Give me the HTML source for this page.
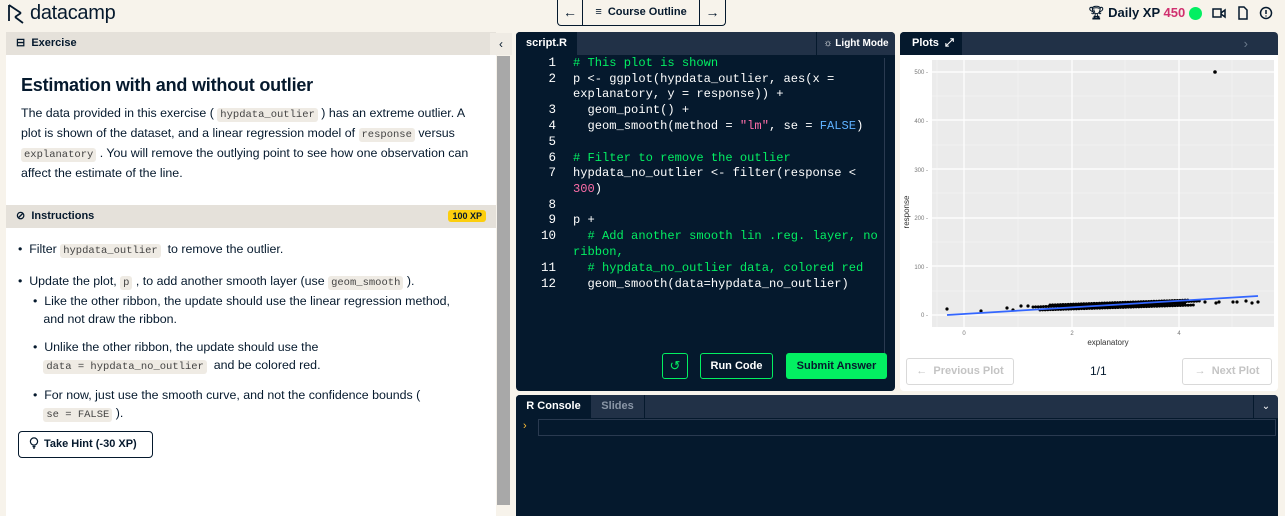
<!DOCTYPE html>
<html><head><meta charset="utf-8"><style>
*{box-sizing:border-box;margin:0;padding:0}
body{width:1285px;height:516px;overflow:hidden;background:#f7f3eb;font-family:"Liberation Sans",sans-serif;color:#05192d;position:relative}
.abs{position:absolute}
code{font-family:"Liberation Mono",monospace;font-size:10.5px;background:#efebe4;padding:1px 3px;border-radius:3px;color:#444}
.lp p{font-size:12.4px;line-height:18px}
.mono{font-family:"Liberation Mono",monospace}
.code div{position:absolute;left:0;font-size:12.1px;white-space:pre;color:#fff}
.code div.c{color:#03ef62}
.ln{position:absolute;width:40px;text-align:right;font-family:"Liberation Mono",monospace;font-size:12.5px;color:#fff}
ul{list-style:none}
</style></head><body>
<!-- top bar -->
<div class="abs" style="left:6px;top:2px;font-size:20px;color:#05192d;display:flex;align-items:center">
<svg width="22" height="22" viewBox="0 0 22 22"><path d="M3 2v16M3 2l12 8M15 10l-6 4M9 14l8 6" stroke="#05192d" stroke-width="1.8" fill="none"/></svg><span style="margin-left:2px;letter-spacing:-0.3px">datacamp</span></div>
<div class="abs" style="left:557px;top:0;width:169px;height:26px;border:1px solid #05192d;border-top:none;border-radius:0 0 4px 4px;display:flex;font-size:11px;font-weight:bold">
<div style="width:25px;border-right:1px solid #05192d;text-align:center;line-height:24px;font-size:14px">←</div>
<div style="flex:1;text-align:center;line-height:24px;border-right:1px solid #05192d">≡&nbsp; Course Outline</div>
<div style="width:25px;text-align:center;line-height:24px;font-size:14px">→</div></div>
<div class="abs" style="left:1088px;top:5px;font-size:13px;font-weight:bold">🏆︎ Daily XP <span style="color:#d0306f">450</span></div>
<div class="abs" style="left:1189px;top:7px;width:13px;height:13px;border-radius:50%;background:#03ef62"></div>
<svg class="abs" style="left:1212px;top:7px" width="14" height="12"><rect x="1" y="2" width="8" height="8" fill="none" stroke="#05192d" stroke-width="1.5"/><path d="M9 6l4-3v7l-4-3" fill="none" stroke="#05192d" stroke-width="1.5"/></svg>
<svg class="abs" style="left:1237px;top:6px" width="12" height="14"><path d="M2 1h5l3 3v9H2z" fill="none" stroke="#05192d" stroke-width="1.5"/></svg>
<svg class="abs" style="left:1259px;top:6px" width="14" height="14"><circle cx="7" cy="7" r="5.5" fill="none" stroke="#05192d" stroke-width="1.5"/><path d="M7 4v4M7 9.5v1" stroke="#05192d" stroke-width="1.5"/></svg>

<!-- left panel -->
<div class="abs lp" style="left:6px;top:32px;width:490px;height:484px;background:#fff">
<div style="height:23px;background:#e5e1da;font-size:11px;font-weight:bold;line-height:22px;padding-left:10px">⊟&nbsp; Exercise</div>
<div style="padding:0 15px">
<div style="font-size:18px;font-weight:bold;margin-top:20px;letter-spacing:-0.2px">Estimation with and without outlier</div>
<p style="margin-top:8px">The data provided in this exercise ( <code>hypdata_outlier</code> ) has an extreme outlier. A plot is shown of the dataset, and a linear regression model of <code>response</code> versus <code>explanatory</code> . You will remove the outlying point to see how one observation can affect the estimate of the line.</p></div>
<div class="abs" style="top:173px;left:0;width:490px;height:23px;background:#e5e1da;font-size:11px;font-weight:bold;line-height:22px;padding-left:10px">⊘&nbsp; Instructions<span style="position:absolute;right:10px;top:5px;background:#fcce0d;font-size:9px;line-height:12px;padding:0 4px;border-radius:3px">100 XP</span></div>
<div class="abs" style="top:208px;left:12px;width:470px">
<p>•&nbsp; Filter <code>hypdata_outlier</code> &nbsp;to remove the outlier.</p>
<p style="margin-top:12px">•&nbsp; Update the plot, <code>p</code> , to add another smooth layer (use <code>geom_smooth</code> ).</p>
<p style="padding-left:15px">•&nbsp; Like the other ribbon, the update should use the linear regression method,<br>&nbsp;&nbsp;&nbsp;and not draw the ribbon.</p>
<p style="padding-left:15px;margin-top:10px">•&nbsp; Unlike the other ribbon, the update should use the<br>&nbsp;&nbsp;&nbsp;<code>data = hypdata_no_outlier</code> &nbsp;and be colored red.</p>
<p style="padding-left:15px;margin-top:10px">•&nbsp; For now, just use the smooth curve, and not the confidence bounds (<br>&nbsp;&nbsp;&nbsp;<code>se = FALSE</code> ).</p>
</div>
<div class="abs" style="left:12px;top:399px;width:135px;height:27px;border:1px solid #05192d;border-radius:4px;font-size:11px;font-weight:bold;line-height:25px;padding-left:10px"><svg width="10" height="12" style="vertical-align:-2px;margin-right:5px"><circle cx="5" cy="4.5" r="3.6" fill="none" stroke="#05192d" stroke-width="1.2"/><path d="M3.5 9.5h3M4 11h2" stroke="#05192d" stroke-width="1.2"/></svg>Take Hint (-30 XP)</div>
</div>
<div class="abs" style="left:490px;top:33px;width:22px;height:22px;background:#efebe4;text-align:center;font-size:12px;line-height:22px">‹</div>
<div class="abs" style="left:497px;top:56px;width:13px;height:449px;background:#a8a8a8"></div>

<!-- editor -->
<div class="abs" style="left:516px;top:32px;width:379px;height:359px;background:#05192d;border-radius:4px;overflow:hidden">
<div style="height:23px;background:#213147;position:relative">
<div style="position:absolute;left:0;width:61px;height:23px;background:#05192d;color:#fff;font-size:11px;font-weight:bold;line-height:23px;text-align:center">script.R</div>
<div style="position:absolute;right:0;width:79px;height:23px;border-left:1px solid #05192d;color:#fff;font-size:10px;font-weight:bold;line-height:23px;text-align:center">☼ Light Mode</div></div>
<div style="position:absolute;left:368px;top:26px;width:1px;height:300px;background:#2a3a50"></div>
<div class="abs" style="left:0;top:0">
<div class="ln" style="top:24px">1</div><div class="ln" style="top:40px">2</div><div class="ln" style="top:71px">3</div><div class="ln" style="top:87px">4</div><div class="ln" style="top:103px">5</div><div class="ln" style="top:119px">6</div><div class="ln" style="top:134px">7</div><div class="ln" style="top:166px">8</div><div class="ln" style="top:181px">9</div><div class="ln" style="top:197px">10</div><div class="ln" style="top:229px">11</div><div class="ln" style="top:245px">12</div>
</div>
<div class="abs code mono" style="left:57px;top:0">
<div style="top:24px" class="c"># This plot is shown</div>
<div style="top:40px">p &lt;- ggplot(hypdata_outlier, aes(x =</div>
<div style="top:55px">explanatory, y = response)) +</div>
<div style="top:71px">  geom_point() +</div>
<div style="top:87px">  geom_smooth(method = <span style="color:#ff6ea9">"lm"</span>, se = <span style="color:#5eb1ff">FALSE</span>)</div>
<div style="top:119px" class="c"># Filter to remove the outlier</div>
<div style="top:134px">hypdata_no_outlier &lt;- filter(response &lt;</div>
<div style="top:150px;color:#ff6ea9">300<span style="color:#fff">)</span></div>
<div style="top:181px">p +</div>
<div style="top:197px" class="c">  # Add another smooth lin .reg. layer, no</div>
<div style="top:213px" class="c">ribbon,</div>
<div style="top:229px" class="c">  # hypdata_no_outlier data, colored red</div>
<div style="top:245px">  geom_smooth(data=hypdata_no_outlier)</div>
</div>
<div class="abs" style="left:146px;top:321px;width:26px;height:26px;border:1px solid #03ef62;border-radius:3px;color:#03ef62;text-align:center;line-height:24px;font-size:13px">↺</div>
<div class="abs" style="left:184px;top:321px;width:73px;height:26px;border:1px solid #03ef62;border-radius:3px;color:#fff;text-align:center;line-height:24px;font-size:11px;font-weight:bold">Run Code</div>
<div class="abs" style="left:270px;top:321px;width:101px;height:26px;background:#03ef62;border-radius:3px;color:#05192d;text-align:center;line-height:26px;font-size:11px;font-weight:bold">Submit Answer</div>
</div>

<!-- plots -->
<div class="abs" style="left:900px;top:32px;width:378px;height:359px;background:#fff;border-radius:4px;overflow:hidden">
<div style="height:23px;background:#213147;position:relative">
<div style="position:absolute;left:0;width:62px;height:23px;background:#05192d;color:#fff;font-size:11px;font-weight:bold;line-height:23px;padding-left:12px">Plots &nbsp;⤢</div>
<div style="position:absolute;right:30px;color:#6b7a8c;line-height:23px;font-size:13px">›</div></div>
<svg class="abs" style="left:0;top:0" width="378" height="320">
<rect x="32" y="28" width="342" height="267" fill="#ebebeb"/>
<g stroke="#f5f5f5" stroke-width="0.6"><line x1="32" x2="374" y1="259" y2="259"/><line x1="32" x2="374" y1="210" y2="210"/><line x1="32" x2="374" y1="161" y2="161"/><line x1="32" x2="374" y1="113" y2="113"/><line x1="32" x2="374" y1="64" y2="64"/><line x1="118" x2="118" y1="28" y2="295"/><line x1="225" x2="225" y1="28" y2="295"/><line x1="332" x2="332" y1="28" y2="295"/><line x1="37" x2="37" y1="28" y2="295"/></g>
<g stroke="#fff" stroke-width="1.2"><line x1="32" x2="374" y1="283" y2="283"/><line x1="32" x2="374" y1="234" y2="234"/><line x1="32" x2="374" y1="186" y2="186"/><line x1="32" x2="374" y1="137" y2="137"/><line x1="32" x2="374" y1="88" y2="88"/><line x1="32" x2="374" y1="40" y2="40"/><line x1="64" x2="64" y1="28" y2="295"/><line x1="172" x2="172" y1="28" y2="295"/><line x1="279" x2="279" y1="28" y2="295"/></g>
<g font-family="Liberation Sans" font-size="6" fill="#777" text-anchor="end"><text x="28" y="42">500 -</text><text x="28" y="91">400 -</text><text x="28" y="140">300 -</text><text x="28" y="188">200 -</text><text x="28" y="237">100 -</text><text x="28" y="285">0 -</text></g>
<g font-family="Liberation Sans" font-size="6" fill="#777" text-anchor="middle"><text x="64" y="303">0</text><text x="172" y="303">2</text><text x="279" y="303">4</text></g>
<text x="208" y="313" font-family="Liberation Sans" font-size="8" fill="#333" text-anchor="middle">explanatory</text>
<text transform="translate(9,180) rotate(-90)" font-family="Liberation Sans" font-size="8" fill="#333" text-anchor="middle">response</text>
<circle cx="315" cy="40" r="1.8" fill="#000"/>
<g fill="#000"><circle cx="47" cy="277" r="1.6"/><circle cx="81" cy="279" r="1.6"/><circle cx="107" cy="276" r="1.6"/><circle cx="113" cy="278" r="1.6"/><circle cx="121" cy="274" r="1.6"/><circle cx="128" cy="274" r="1.6"/><circle cx="305" cy="270" r="1.6"/><circle cx="316" cy="271" r="1.6"/><circle cx="319" cy="270" r="1.6"/><circle cx="333" cy="270" r="1.6"/><circle cx="346" cy="269" r="1.6"/><circle cx="352" cy="271" r="1.6"/><circle cx="358" cy="270" r="1.6"/><circle cx="337" cy="270" r="1.6"/></g>
<g stroke="#000" stroke-width="3" stroke-linecap="round" stroke-dasharray="0 2.6" fill="none"><line x1="133" y1="275" x2="300" y2="269"/><line x1="140" y1="278" x2="295" y2="273"/><line x1="160" y1="276" x2="285" y2="271"/><line x1="150" y1="273" x2="290" y2="268"/></g>
<line x1="47" y1="283" x2="358" y2="264" stroke="#3366ff" stroke-width="1.8"/>
</svg>
<div class="abs" style="left:6px;top:326px;width:108px;height:27px;border:1px solid #d9d9d9;border-radius:3px;color:#c4c4c4;font-size:11px;line-height:25px;text-align:center;font-weight:bold">← &nbsp;Previous Plot</div>
<div class="abs" style="left:190px;top:332px;font-size:12px">1/1</div>
<div class="abs" style="left:282px;top:326px;width:90px;height:27px;border:1px solid #d9d9d9;border-radius:3px;color:#c4c4c4;font-size:11px;line-height:25px;text-align:center;font-weight:bold">→ &nbsp;Next Plot</div>
</div>

<!-- console -->
<div class="abs" style="left:516px;top:395px;width:762px;height:121px;background:#05192d;border-radius:4px 4px 0 0;overflow:hidden">
<div style="height:23px;background:#213147;position:relative">
<div style="position:absolute;left:0;width:75px;height:23px;background:#05192d;color:#fff;font-size:11px;font-weight:bold;line-height:23px;text-align:center">R Console</div>
<div style="position:absolute;left:75px;width:54px;height:23px;color:#8a96a6;font-size:11px;font-weight:bold;line-height:23px;text-align:center;border-right:1px solid #05192d">Slides</div>
<div style="position:absolute;right:0;width:25px;height:23px;border-left:1px solid #05192d;color:#fff;text-align:center;line-height:23px;font-size:10px">⌄</div></div>
<div class="abs" style="left:7px;top:25px;color:#ffbd35;font-size:11px">›</div>
<div class="abs" style="left:22px;top:24px;width:738px;height:17px;border:1px solid #2a3a50"></div>
</div>
</body></html>
